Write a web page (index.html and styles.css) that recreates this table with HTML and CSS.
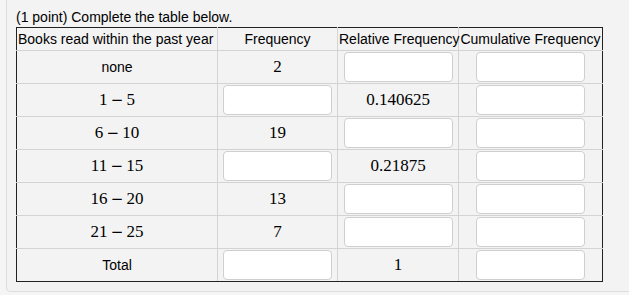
FILE: index.html
```html
<!DOCTYPE html>
<html>
<head>
<meta charset="utf-8">
<link rel="stylesheet" href="styles.css">
</head>
<body>
<div class="problem">
  <div class="title">(1 point) Complete the table below.</div>
  <table class="freq">
    <colgroup>
      <col class="c1"><col class="c2"><col class="c3"><col class="c4">
    </colgroup>
    <thead>
      <tr>
        <th>Books read within the past year</th>
        <th>Frequency</th>
        <th>Relative Frequency</th>
        <th>Cumulative Frequency</th>
      </tr>
    </thead>
    <tbody>
      <tr>
        <td class="txt">none</td>
        <td class="num">2</td>
        <td><span class="box"></span></td>
        <td><span class="box"></span></td>
      </tr>
      <tr>
        <td class="num">1 <span class="op">&minus;</span> 5</td>
        <td><span class="box"></span></td>
        <td class="num">0.140625</td>
        <td><span class="box"></span></td>
      </tr>
      <tr>
        <td class="num">6 <span class="op">&minus;</span> 10</td>
        <td class="num">19</td>
        <td><span class="box"></span></td>
        <td><span class="box"></span></td>
      </tr>
      <tr>
        <td class="num">11 <span class="op">&minus;</span> 15</td>
        <td><span class="box"></span></td>
        <td class="num">0.21875</td>
        <td><span class="box"></span></td>
      </tr>
      <tr>
        <td class="num">16 <span class="op">&minus;</span> 20</td>
        <td class="num">13</td>
        <td><span class="box"></span></td>
        <td><span class="box"></span></td>
      </tr>
      <tr>
        <td class="num">21 <span class="op">&minus;</span> 25</td>
        <td class="num">7</td>
        <td><span class="box"></span></td>
        <td><span class="box"></span></td>
      </tr>
      <tr>
        <td class="txt">Total</td>
        <td><span class="box"></span></td>
        <td class="num">1</td>
        <td><span class="box"></span></td>
      </tr>
    </tbody>
  </table>
</div>
</body>
</html>
```

FILE: styles.css
```css
html, body {
  margin: 0;
  padding: 0;
  background: #f5f5f5;
}
body {
  font-family: "Liberation Sans", Arial, sans-serif;
  font-size: 14px;
  color: #000;
}
.problem {
  margin: -10px -10px 0 6px;
  padding: 18px 9px 9px 9px;
  background: #f3f3f3;
  border: 1px solid #dddddd;
  border-radius: 4px;
}
.title {
  line-height: 17px;
  height: 18px;
}
.freq {
  border-collapse: collapse;
  table-layout: fixed;
  width: 587px;
  border: 1px solid #222;
}
.c1 { width: 201px; }
.c2 { width: 120px; }
.c3 { width: 121px; }
.c4 { width: 144px; }
.freq th,
.freq td {
  border: 1px solid #d3d3d3;
}
.freq thead th { border-top-color: #222; }
.freq tbody tr:last-child td { border-bottom-color: #222; }
.freq tr > :first-child { border-left-color: #222; }
.freq tr > :last-child { border-right-color: #222; }
.freq th {
  font-weight: normal;
  height: 22px;
  padding: 0 1px;
  white-space: nowrap;
  text-align: center;
  vertical-align: middle;
}
.freq th:first-child { text-align: left; }
.freq td {
  height: 32px;
  padding: 0;
  text-align: center;
  vertical-align: middle;
}
.freq td.txt { font-size: 14px; }
.freq td.num {
  font-family: "Liberation Serif", "Times New Roman", serif;
  font-size: 17px;
  word-spacing: -1px;
}
.op {
  font-family: "DejaVu Serif", serif;
  font-size: 15px;
}
.box {
  display: block;
  margin: 0 auto;
  width: 107px;
  height: 28px;
  background: #fff;
  border: 1px solid #cfcfcf;
  border-radius: 4px;
}
```
